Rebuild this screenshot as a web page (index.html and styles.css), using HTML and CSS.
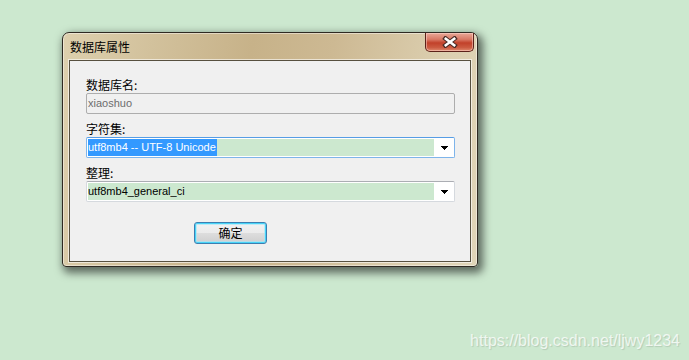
FILE: index.html
```html
<!DOCTYPE html>
<html lang="zh-CN">
<head>
<meta charset="utf-8">
<title>数据库属性</title>
<link rel="stylesheet" href="styles.css">
</head>
<body>
<div class="window">
  <div class="titlebar">
    <span class="title">数据库属性</span>
    <button class="close" type="button" aria-label="关闭">
      <svg width="16" height="12" viewBox="0 0 16 12">
        <path d="M3.5 2.5 L12.5 9.5 M12.5 2.5 L3.5 9.5" stroke="#4a2c26" stroke-width="4.6" stroke-linecap="square" fill="none"/>
        <path d="M3.8 2.8 L12.2 9.2 M12.2 2.8 L3.8 9.2" stroke="#ffffff" stroke-width="2.6" stroke-linecap="square" fill="none"/>
      </svg>
    </button>
  </div>
  <div class="client">
    <div class="label">数据库名:</div>
    <div class="field input">xiaoshuo</div>
    <div class="label">字符集:</div>
    <div class="field select focused">
      <div class="value"><span class="sel">utf8mb4 -- UTF-8 Unicode</span></div>
      <div class="arrow"><svg width="7" height="4" viewBox="0 0 7 4"><path d="M0 0 H7 V1 H6 V2 H5 V3 H4 V4 H3 V3 H2 V2 H1 V1 H0 Z" fill="#000"/></svg></div>
    </div>
    <div class="label">整理:</div>
    <div class="field select">
      <div class="value">utf8mb4_general_ci</div>
      <div class="arrow"><svg width="7" height="4" viewBox="0 0 7 4"><path d="M0 0 H7 V1 H6 V2 H5 V3 H4 V4 H3 V3 H2 V2 H1 V1 H0 Z" fill="#000"/></svg></div>
    </div>
    <div class="buttons">
      <button class="ok" type="button">确定</button>
    </div>
  </div>
</div>
<div class="watermark">https://blog.csdn.net/ljwy1234</div>
</body>
</html>
```

FILE: styles.css
```css
html, body {
  margin: 0;
  padding: 0;
}
body {
  width: 689px;
  height: 360px;
  background: #cce8cf;
  position: relative;
  overflow: hidden;
  font-family: "Noto Sans CJK SC", "Liberation Sans", sans-serif;
}
.window {
  box-sizing: border-box;
  width: 416px;
  height: 235px;
  margin: 32px 0 0 62px;
  border: 1px solid #2f2a22;
  border-radius: 7px 7px 4px 4px;
  background: linear-gradient(100deg, #ded0ae 0%, #d2c19c 20%, #c7b289 42%, #cdb993 60%, #dccfb0 85%, #e0d5b8 100%);
  box-shadow: inset 0 0 0 1px rgba(255,255,255,0.45), 3px 4px 9px 2px rgba(0,0,0,0.55);
  padding: 0 6px 4px 6px;
  display: flex;
  flex-direction: column;
}
.titlebar {
  height: 27px;
  display: flex;
  align-items: flex-start;
}
.title {
  font-size: 12px;
  line-height: 27px;
  padding-left: 1px;
  color: #000;
  font-family: "Noto Sans CJK SC", sans-serif;
}
.close {
  margin-left: auto;
  margin-right: -3px;
  width: 49px;
  height: 19px;
  padding: 0;
  border: 1px solid #5c2119;
  border-top: none;
  border-radius: 0 0 5px 5px;
  background: linear-gradient(#e9a898 0%, #d97a66 35%, #c2412a 55%, #cb5a40 80%, #e08a6e 100%);
  box-shadow: inset 0 0 0 1px rgba(255,220,210,0.5);
  display: flex;
  align-items: center;
  justify-content: center;
}
.close svg {
  display: block;
}
.client {
  flex: 1;
  background: #f0f0f0;
  border: 1px solid #57503f;
  box-shadow: 0 0 0 1px rgba(255,255,255,0.6);
  padding: 16px 15px 0 16px;
}
.label {
  font-size: 12px;
  line-height: 16px;
  height: 16px;
  color: #000;
  margin-top: 7px;
}
.label:first-child {
  margin-top: 0;
}
.field {
  box-sizing: border-box;
  height: 21px;
  font-family: "Liberation Sans", sans-serif;
  font-size: 11px;
}
.input {
  border: 1px solid #adadad;
  border-radius: 2px;
  background: #f0f0f0;
  color: #6d6d6d;
  line-height: 19px;
  padding-left: 1px;
}
.select {
  border: 1px solid #d5d9de;
  border-top-color: #abadb3;
  border-radius: 2px;
  background: #fff;
  padding: 1px;
  display: flex;
}
.select.focused {
  border-color: #7eb4ea;
  border-top-color: #569de5;
}
.value {
  flex: 1;
  background: #cce8cf;
  color: #000;
  line-height: 17px;
  height: 17px;
  white-space: nowrap;
}
.sel {
  display: inline-block;
  background: #3399ff;
  color: #fff;
  padding-right: 1px;
}
.arrow {
  width: 19px;
  display: flex;
  align-items: center;
  justify-content: center;
}
.arrow svg {
  display: block;
  margin-left: 1px;
}
.buttons {
  margin-top: 17px;
  padding-left: 108px;
}
.ok {
  width: 73px;
  height: 22px;
  padding: 0;
  border: 1px solid #3c7fb1;
  border-radius: 3px;
  background: linear-gradient(#f2f2f2 0%, #ebebeb 50%, #dddddd 51%, #cfcfcf 100%);
  box-shadow: inset 0 0 0 1px #48d4f8, inset 0 0 0 2px rgba(160,230,250,0.6);
  font-family: "Noto Sans CJK SC", sans-serif;
  font-size: 12px;
  line-height: 18px;
  color: #000;
}
.watermark {
  position: absolute;
  right: 9px;
  bottom: 10px;
  font-family: "Liberation Sans", sans-serif;
  font-size: 16px;
  color: rgba(255,255,255,0.75);
  text-shadow: 1px 1px 1px rgba(0,0,0,0.12);
}
```
